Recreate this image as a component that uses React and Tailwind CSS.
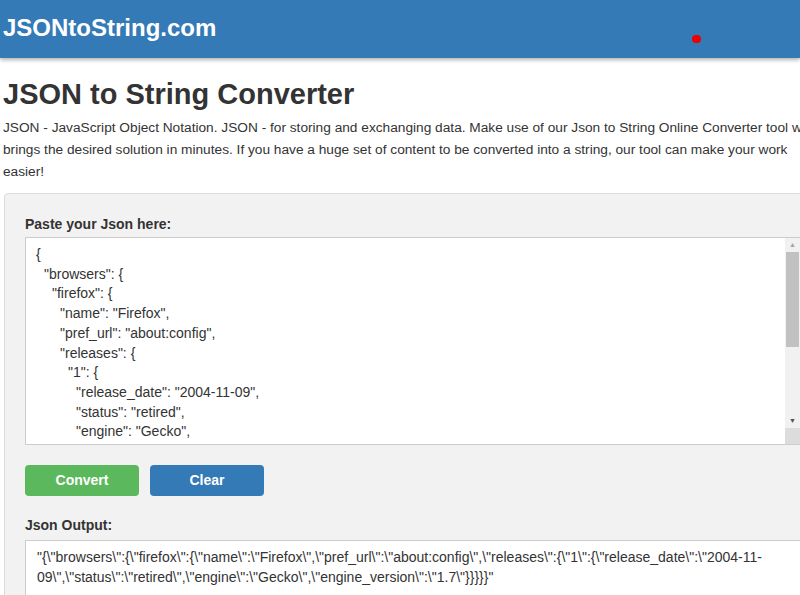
export default function App() {
  const lines = [
    [0, "{"],
    [1, '"browsers": {'],
    [2, '"firefox": {'],
    [3, '"name": "Firefox",'],
    [3, '"pref_url": "about:config",'],
    [3, '"releases": {'],
    [4, '"1": {'],
    [5, '"release_date": "2004-11-09",'],
    [5, '"status": "retired",'],
    [5, '"engine": "Gecko",'],
    [5, '"engine_version": "1.7"'],
  ];
  return (
    <div className="w-[800px] h-[595px] overflow-hidden bg-white text-[#333]" style={{ fontFamily: '"Liberation Sans", Arial, sans-serif' }}>
      <div className="relative h-[58px] bg-[#337ab7] shadow-[0_2px_4px_rgba(0,0,0,0.3)] flex items-center px-[3px]">
        <span className="text-white font-bold text-[24px] -mt-[3px]">JSONtoString.com</span>
        <span className="absolute left-[692px] top-[35px] w-[9px] h-[8px] rounded-full bg-[#e00]" />
      </div>
      <div className="pl-[3px] w-[1100px]">
        <h1 className="text-[29px] font-bold mt-[18px] leading-[36px] text-[#333]">JSON to String Converter</h1>
        <p className="text-[13.7px] leading-[22px] mt-[5px] whitespace-nowrap">
          JSON - JavaScript Object Notation. JSON - for storing and exchanging data. Make use of our Json to String Online Converter tool which<br />
          brings the desired solution in minutes. If you have a huge set of content to be converted into a string, our tool can make your work<br />
          easier!
        </p>
        <div className="mt-[10px] ml-[1px] border border-[#ddd] rounded-[4px] bg-[#f2f2f2] px-[20px] pt-[20px] pb-4">
          <div className="text-[14px] font-bold leading-5">Paste your Json here:</div>
          <div className="mt-[3px] w-[776px] h-[208px] bg-white border border-[#ccc] flex">
            <div className="flex-1 pt-[7px] pl-[10px] text-[14px] leading-[19.7px] overflow-hidden">
              {lines.map(([i, t], k) => (
                <div key={k} className="whitespace-nowrap" style={{ paddingLeft: i * 8 }}>{t}</div>
              ))}
            </div>
            <div className="w-[15px] bg-[#f1f1f1] flex flex-col items-center">
              <div className="h-[14px] flex items-center text-[#a3a3a3] text-[7px]">▲</div>
              <div className="w-[13px] h-[95px] bg-[#c1c1c1]" />
              <div className="flex-1" />
              <div className="h-[14px] flex items-center text-[#505050] text-[7px]">▼</div>
              <div className="w-[15px] h-[16px] bg-[#dcdcdc]" />
            </div>
          </div>
          <div className="flex gap-[11px] mt-[20px]">
            <button className="w-[114px] h-[31px] rounded-[4px] bg-[#5cb85c] text-white font-bold text-[14px]">Convert</button>
            <button className="w-[114px] h-[31px] rounded-[4px] bg-[#337ab7] text-white font-bold text-[14px]">Clear</button>
          </div>
          <div className="text-[14px] font-bold leading-5 mt-[19px]">Json Output:</div>
          <div className="mt-[5px] bg-white border border-[#ccc] pt-[6px] pl-[11px] text-[14px] leading-[20px] h-[70px]">
            <div className="whitespace-nowrap">"{"{"}\"browsers\":{"{"}\"firefox\":{"{"}\"name\":\"Firefox\",\"pref_url\":\"about:config\",\"releases\":{"{"}\"1\":{"{"}\"release_date\":\"2004-11-</div>
            <div className="whitespace-nowrap">09\",\"status\":\"retired\",\"engine\":\"Gecko\",\"engine_version\":\"1.7\"{"}}}}}"}"</div>
          </div>
        </div>
      </div>
    </div>
  );
}
